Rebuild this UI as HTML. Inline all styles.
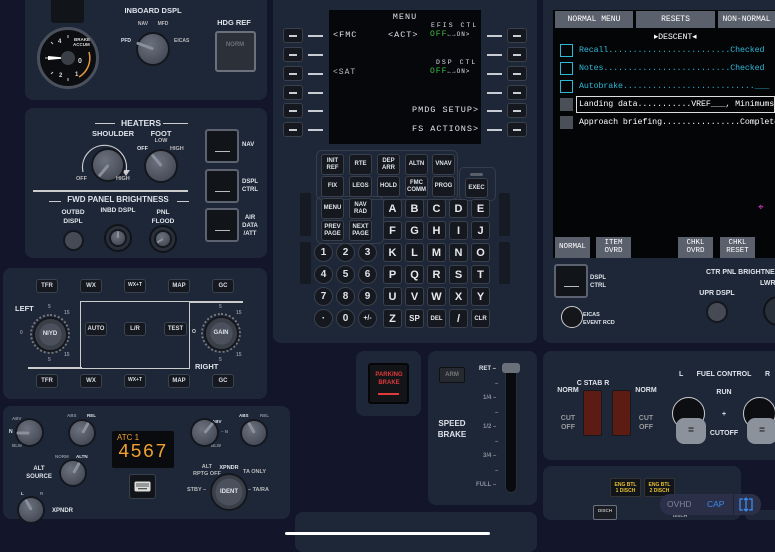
<!DOCTYPE html>
<html><head><meta charset="utf-8"><style>
*{margin:0;padding:0;box-sizing:border-box}
body{width:775px;height:540px;background:#13152a;position:relative;overflow:hidden;font-family:"Liberation Sans",sans-serif;color:#dfe3ea;font-weight:bold}
.a{position:absolute}
.pn{position:absolute;background:#1e2738;border-radius:8px}
.t{position:absolute;font-size:8px;white-space:nowrap;line-height:1}
.c{transform:translateX(-50%);text-align:center}
.btn{position:absolute;background:#15191f;border:1px solid #3b4250;border-radius:3px;font-size:6px;color:#d8dce4;display:flex;align-items:center;justify-content:center;text-align:center;line-height:1.05}
.sq{position:absolute;background:#111418;border:2px solid #5c6270;border-radius:3px}
.sq::after{content:"";position:absolute;left:25%;right:25%;bottom:30%;height:1px;background:#bbb}
.knob{position:absolute;border-radius:50%;background:radial-gradient(circle at 40% 35%,#6b717e,#3a3f4a);box-shadow:0 0 0 2px #14171d}
.knob i{position:absolute;left:50%;top:50%;width:3px;height:50%;margin-left:-1.5px;background:#8a909c;transform-origin:50% 0;border-radius:2px}
.ring{position:absolute;border-radius:50%;background:#2a303a;box-shadow:0 0 0 2px #101318}
.lsk{position:absolute;width:20px;height:15px;background:#15191f;border:1px solid #3a404c;border-radius:3px}
.lsk::after{content:"";position:absolute;left:5px;right:5px;top:6px;height:1.5px;background:#c9ccd2}
.dash{position:absolute;width:15px;height:1.5px;background:#c9ccd2}
.key{position:absolute;width:19px;height:19px;background:#15191f;border:1px solid #3a404c;border-radius:3px;font-size:11px;color:#e6e8ec;display:flex;align-items:center;justify-content:center}
.num{position:absolute;width:19px;height:19px;border-radius:50%;background:#15191f;border:1px solid #3a404c;font-size:10px;display:flex;align-items:center;justify-content:center}
.fk{position:absolute;width:23px;height:21px;background:#15191f;border:1px solid #3a404c;border-radius:3px;font-size:6px;display:flex;align-items:center;justify-content:center;text-align:center;line-height:1.1}
.scr{font-family:"Liberation Mono",monospace;font-weight:normal;letter-spacing:1px}
.cl{font-family:"Liberation Mono",monospace;font-weight:normal;font-size:8.3px;position:absolute;white-space:nowrap;letter-spacing:-0.1px}
.cb{position:absolute;width:13px;height:13px;border:1px solid #2fb8d8}
.gb{position:absolute;width:13px;height:13px;background:#4a4f58}
.tab{position:absolute;top:11px;height:17px;background:#5a606c;font-family:"Liberation Mono",monospace;font-size:8px;display:flex;align-items:center;justify-content:center;color:#fff;font-weight:normal}
.bb{position:absolute;top:237px;height:21px;background:#5a606c;font-family:"Liberation Mono",monospace;font-size:7.5px;display:flex;align-items:center;justify-content:center;text-align:center;color:#fff;font-weight:normal;line-height:1}
.side{position:absolute;width:11px;background:#161a22;border-radius:2px}
.g{color:#8a909a}
</style></head><body>

<div class="t c" style="left:387px;top:1px;font-size:8px;color:#aaa;letter-spacing:1px">•••</div>

<!-- TOP LEFT PANEL -->
<div class="pn" style="left:25px;top:-8px;width:242px;height:108px"></div>
<div class="a" style="left:51px;top:0;width:33px;height:23px;background:#111418;border-radius:0 0 3px 3px"></div>
<div class="a" style="left:37px;top:27px;width:62px;height:62px;border-radius:50%;background:#0c0d10;border:3px solid #4a505c"></div>
<svg class="a" style="left:37px;top:27px" width="62" height="62" viewBox="0 0 62 62">
<path d="M52 25 A22 22 0 0 1 42 50" stroke="#e59a3a" stroke-width="1.5" fill="none"/>
<g stroke="#ccc" stroke-width="1">
<line x1="31" y1="8" x2="31" y2="11"/><line x1="14" y1="15" x2="16" y2="17"/><line x1="8" y1="31" x2="11" y2="31"/><line x1="14" y1="47" x2="16" y2="45"/><line x1="31" y1="54" x2="31" y2="51"/>
</g>
<polygon points="11,29 32,31 11,33" fill="#fff"/>
<circle cx="31" cy="31" r="7" fill="#3a3e46"/>
<text x="21" y="16" fill="#ddd" font-size="6" font-family="Liberation Sans">4</text>
<text x="41" y="36" fill="#ddd" font-size="7" font-family="Liberation Sans">0</text>
<text x="22" y="50" fill="#ddd" font-size="6" font-family="Liberation Sans">2</text>
<text x="38" y="49" fill="#ddd" font-size="6" font-family="Liberation Sans">1</text>
<text x="37" y="14" fill="#ddd" font-size="4.5" font-family="Liberation Sans" font-weight="bold">BRAKE</text>
<text x="36" y="19" fill="#ddd" font-size="4.5" font-family="Liberation Sans" font-weight="bold">ACCUM</text>
</svg>
<div class="t c" style="left:153px;top:7px;font-size:7.5px">INBOARD DSPL</div>
<div class="t c g" style="left:143px;top:22px;font-size:5px;color:#bbb">NAV</div>
<div class="t c g" style="left:163px;top:22px;font-size:5px;color:#bbb">MFD</div>
<div class="t" style="left:121px;top:39px;font-size:5px">PFD</div>
<div class="t" style="left:174px;top:39px;font-size:5px;color:#bbb">EICAS</div>
<div class="knob" style="left:138px;top:34px;width:30px;height:30px"><i style="transform:rotate(110deg);height:60%"></i></div>
<div class="t c" style="left:234px;top:19px;font-size:7.5px">HDG REF</div>
<div class="a" style="left:215px;top:31px;width:41px;height:41px;border:2px solid #6a707c;background:#2c3038;border-radius:3px"></div>
<div class="t c g" style="left:235px;top:42px;font-size:6px;color:#6a707a">NORM</div>

<!-- HEATERS PANEL -->
<div class="pn" style="left:25px;top:108px;width:242px;height:150px"></div>
<div class="a" style="left:95px;top:123px;width:20px;height:1px;background:#ccc"></div>
<div class="a" style="left:163px;top:123px;width:25px;height:1px;background:#ccc"></div>
<div class="t c" style="left:141px;top:119px;font-size:8.5px">HEATERS</div>
<div class="t c" style="left:113px;top:130px;font-size:7.5px">SHOULDER</div>
<div class="t c" style="left:161px;top:130px;font-size:7.5px">FOOT</div>
<div class="t c" style="left:161px;top:139px;font-size:5.5px;color:#bbb">LOW</div>
<div class="t" style="left:137px;top:147px;font-size:5.5px">OFF</div>
<div class="t" style="left:170px;top:147px;font-size:5.5px;color:#bbb">HIGH</div>
<svg class="a" style="left:78px;top:140px" width="55" height="40"><path d="M5 32 A22 22 0 1 1 48 32" stroke="#ccc" stroke-width="1.2" fill="none"/><polygon points="44,30 52,30 48,36" fill="#ccc"/></svg>
<div class="knob" style="left:93px;top:150px;width:30px;height:30px"><i style="transform:rotate(40deg)"></i></div>
<div class="knob" style="left:146px;top:151px;width:30px;height:30px"><i style="transform:rotate(140deg)"></i></div>
<div class="t" style="left:76px;top:177px;font-size:5.5px;color:#bbb">OFF</div>
<div class="t" style="left:116px;top:177px;font-size:5.5px;color:#bbb">HIGH</div>
<div class="a" style="left:33px;top:190px;width:155px;height:1.5px;background:#ccc"></div>
<div class="a" style="left:49px;top:201px;width:12px;height:1px;background:#ccc"></div>
<div class="a" style="left:177px;top:201px;width:12px;height:1px;background:#ccc"></div>
<div class="t c" style="left:118px;top:196px;font-size:8px">FWD PANEL BRIGHTNESS</div>
<div class="t c" style="left:73px;top:208px;font-size:6.5px;line-height:9px">OUTBD<br>DISPL</div>
<div class="t c" style="left:118px;top:208px;font-size:6.5px">INBD DSPL</div>
<div class="t c" style="left:163px;top:208px;font-size:6.5px;line-height:9px">PNL<br>FLOOD</div>
<div class="knob" style="left:65px;top:232px;width:17px;height:17px;background:#454a54"></div>
<div class="ring" style="left:106px;top:226px;width:24px;height:24px"></div>
<div class="knob" style="left:111px;top:231px;width:14px;height:14px"><i style="transform:rotate(180deg);width:2px"></i></div>
<div class="ring" style="left:151px;top:227px;width:24px;height:24px"></div>
<div class="knob" style="left:156px;top:232px;width:14px;height:14px"><i style="transform:rotate(60deg);width:2px"></i></div>
<div class="sq" style="left:205px;top:129px;width:34px;height:34px"></div>
<div class="t" style="left:242px;top:142px;font-size:6px">NAV</div>
<div class="sq" style="left:205px;top:169px;width:34px;height:34px"></div>
<div class="t" style="left:242px;top:178px;font-size:6px;line-height:8px">DSPL<br>CTRL</div>
<div class="sq" style="left:205px;top:208px;width:34px;height:34px"></div>
<div class="t c" style="left:250px;top:214px;font-size:6px;line-height:8px">AIR<br>DATA<br>/ATT</div>

<!-- WX RADAR PANEL -->
<div class="pn" style="left:3px;top:268px;width:264px;height:131px"></div>
<div class="btn" style="left:36px;top:279px;width:22px;height:14px">TFR</div>
<div class="btn" style="left:80px;top:279px;width:22px;height:14px">WX</div>
<div class="btn" style="left:124px;top:279px;width:22px;height:14px;font-size:5px">WX+T</div>
<div class="btn" style="left:168px;top:279px;width:22px;height:14px">MAP</div>
<div class="btn" style="left:212px;top:279px;width:22px;height:14px">GC</div>
<div class="btn" style="left:36px;top:374px;width:22px;height:14px">TFR</div>
<div class="btn" style="left:80px;top:374px;width:22px;height:14px">WX</div>
<div class="btn" style="left:124px;top:374px;width:22px;height:14px;font-size:5px">WX+T</div>
<div class="btn" style="left:168px;top:374px;width:22px;height:14px">MAP</div>
<div class="btn" style="left:212px;top:374px;width:22px;height:14px">GC</div>
<div class="a" style="left:80px;top:301px;width:110px;height:68px;border:1.5px solid #ccc"></div>
<div class="a" style="left:189px;top:301px;width:54px;height:1.5px;background:#ccc"></div>
<div class="a" style="left:28px;top:367px;width:54px;height:1.5px;background:#ccc"></div>
<div class="btn" style="left:85px;top:322px;width:22px;height:14px">AUTO</div>
<div class="btn" style="left:124px;top:322px;width:22px;height:14px">L/R</div>
<div class="btn" style="left:164px;top:322px;width:23px;height:14px">TEST</div>
<div class="t" style="left:15px;top:305px;font-size:7.5px">LEFT</div>
<div class="t" style="left:195px;top:363px;font-size:7.5px">RIGHT</div>
<div class="t g" style="left:20px;top:331px;font-size:5px">0</div>
<div class="t g" style="left:48px;top:305px;font-size:5px">5</div><div class="t g" style="left:64px;top:311px;font-size:5px">15</div>
<div class="t g" style="left:48px;top:358px;font-size:5px">5</div><div class="t g" style="left:64px;top:353px;font-size:5px">15</div>
<div class="a" style="left:30px;top:314px;width:40px;height:40px;border-radius:50%;border:2px dotted #777"></div>
<div class="knob" style="left:35px;top:319px;width:31px;height:31px;background:radial-gradient(circle,#4a505c 50%,#3a3f48 52%)"></div>
<div class="t c" style="left:50px;top:331px;font-size:6px">NIYD</div>
<div class="t g" style="left:192px;top:330px;font-size:5px;color:#ddd">O</div>
<div class="t g" style="left:219px;top:305px;font-size:5px">5</div><div class="t g" style="left:236px;top:311px;font-size:5px">15</div>
<div class="t g" style="left:219px;top:358px;font-size:5px">5</div><div class="t g" style="left:236px;top:353px;font-size:5px">15</div>
<div class="a" style="left:201px;top:313px;width:40px;height:40px;border-radius:50%;border:2px dotted #777"></div>
<div class="knob" style="left:206px;top:318px;width:31px;height:31px;background:radial-gradient(circle,#4a505c 50%,#3a3f48 52%)"></div>
<div class="t c" style="left:221px;top:330px;font-size:6px">GAIN</div>

<!-- XPDR PANEL -->
<div class="pn" style="left:3px;top:406px;width:287px;height:113px"></div>
<div class="t g" style="left:12px;top:417px;font-size:4.5px">ABV</div>
<div class="t" style="left:9px;top:430px;font-size:5px">N</div>
<div class="t g" style="left:12px;top:444px;font-size:4.5px">BLW</div>
<div class="knob" style="left:17px;top:420px;width:25px;height:25px"><i style="transform:rotate(90deg)"></i></div>
<div class="t g" style="left:67px;top:414px;font-size:4.5px">ABS</div><div class="t" style="left:87px;top:414px;font-size:4.5px">REL</div>
<div class="knob" style="left:70px;top:421px;width:24px;height:24px"><i style="transform:rotate(210deg)"></i></div>
<div class="t g" style="left:55px;top:455px;font-size:4.5px">NORM</div><div class="t" style="left:76px;top:455px;font-size:4.5px">ALTN</div>
<div class="knob" style="left:61px;top:461px;width:24px;height:24px"><i style="transform:rotate(210deg)"></i></div>
<div class="t c" style="left:39px;top:465px;font-size:6px;line-height:8px">ALT<br>SOURCE</div>
<div class="t" style="left:21px;top:492px;font-size:4.5px">L</div><div class="t g" style="left:40px;top:492px;font-size:4.5px">R</div>
<div class="knob" style="left:19px;top:498px;width:24px;height:24px"><i style="transform:rotate(150deg)"></i></div>
<div class="t" style="left:52px;top:508px;font-size:6px">XPNDR</div>
<div class="a" style="left:112px;top:431px;width:62px;height:37px;background:#0a0b0e;border-radius:2px"></div>
<div class="t" style="left:117px;top:434px;font-size:8px;color:#f0a030;font-weight:normal">ATC 1</div>
<div class="t" style="left:118px;top:443px;font-size:19px;color:#f0a030;font-weight:normal;font-family:'Liberation Mono',monospace;letter-spacing:1px">4567</div>
<div class="a" style="left:129px;top:474px;width:27px;height:25px;background:#111418;border:1px solid #3a404c;border-radius:3px"></div>
<svg class="a" style="left:134px;top:481px" width="17" height="11"><rect x="0.5" y="0.5" width="16" height="10" rx="1.5" fill="#ddd"/><g fill="#555"><rect x="2" y="2.5" width="13" height="1"/><rect x="2" y="4.5" width="13" height="1"/><rect x="4" y="7" width="9" height="1.3"/></g></svg>
<div class="t" style="left:212px;top:420px;font-size:4.5px">ABV</div><div class="t g" style="left:221px;top:430px;font-size:4.5px">– N</div><div class="t g" style="left:211px;top:444px;font-size:4.5px">BLW</div>
<div class="knob" style="left:192px;top:420px;width:25px;height:25px"><i style="transform:rotate(220deg)"></i></div>
<div class="t" style="left:239px;top:414px;font-size:4.5px">ABS</div><div class="t g" style="left:260px;top:414px;font-size:4.5px">REL</div>
<div class="knob" style="left:242px;top:421px;width:24px;height:24px"><i style="transform:rotate(150deg)"></i></div>
<div class="t g" style="left:193px;top:464px;font-size:5.5px;color:#bbb;line-height:7px;text-align:center">ALT<br>RPTG OFF</div>
<div class="t c" style="left:229px;top:466px;font-size:5.5px">XPNDR</div>
<div class="t" style="left:243px;top:470px;font-size:5.5px;color:#bbb">TA ONLY</div>
<div class="t" style="left:187px;top:488px;font-size:5.5px;color:#bbb">STBY –</div>
<div class="t" style="left:248px;top:488px;font-size:5.5px;color:#bbb">– TA/RA</div>
<div class="knob" style="left:212px;top:475px;width:34px;height:34px;background:radial-gradient(circle,#4a505c 55%,#3a3f48 57%)"></div>
<div class="t c" style="left:229px;top:489px;font-size:6px">IDENT</div>

<!-- CDU PANEL -->
<div class="pn" style="left:273px;top:-8px;width:264px;height:351px"></div>
<div class="a" style="left:329px;top:10px;width:152px;height:134px;background:#06070b"></div>
<div class="t c scr" style="left:405px;top:13px;font-size:8.5px">MENU</div>
<div class="t scr" style="left:333px;top:31px;font-size:8.5px">&lt;FMC</div>
<div class="t scr" style="left:388px;top:31px;font-size:8.5px">&lt;ACT&gt;</div>
<div class="t scr" style="left:431px;top:23px;font-size:6.5px;letter-spacing:2px">EFIS CTL</div>
<div class="t scr" style="left:430px;top:31px;font-size:8px"><span style="color:#3ec040">OFF</span><span style="font-size:6px">←→ON&gt;</span></div>
<div class="t scr" style="left:436px;top:60px;font-size:6.5px;letter-spacing:2px">DSP CTL</div>
<div class="t scr" style="left:430px;top:68px;font-size:8px"><span style="color:#3ec040">OFF</span><span style="font-size:6px">←→ON&gt;</span></div>
<div class="t scr" style="left:333px;top:69px;font-size:8px;color:#bbb">&lt;SAT</div>
<div class="t scr" style="left:412px;top:106px;font-size:8.5px">PMDG SETUP&gt;</div>
<div class="t scr" style="left:412px;top:125px;font-size:8.5px">FS ACTIONS&gt;</div>
<div class="lsk" style="left:283px;top:28px"></div><div class="dash" style="left:308px;top:35px"></div>
<div class="lsk" style="left:283px;top:47px"></div><div class="dash" style="left:308px;top:54px"></div>
<div class="lsk" style="left:283px;top:66px"></div><div class="dash" style="left:308px;top:73px"></div>
<div class="lsk" style="left:283px;top:85px"></div><div class="dash" style="left:308px;top:92px"></div>
<div class="lsk" style="left:283px;top:103px"></div><div class="dash" style="left:308px;top:110px"></div>
<div class="lsk" style="left:283px;top:122px"></div><div class="dash" style="left:308px;top:129px"></div>
<div class="lsk" style="left:507px;top:28px"></div><div class="dash" style="left:487px;top:35px"></div>
<div class="lsk" style="left:507px;top:47px"></div><div class="dash" style="left:487px;top:54px"></div>
<div class="lsk" style="left:507px;top:66px"></div><div class="dash" style="left:487px;top:73px"></div>
<div class="lsk" style="left:507px;top:85px"></div><div class="dash" style="left:487px;top:92px"></div>
<div class="lsk" style="left:507px;top:103px"></div><div class="dash" style="left:487px;top:110px"></div>
<div class="lsk" style="left:507px;top:122px"></div><div class="dash" style="left:487px;top:129px"></div>
<div class="a" style="left:316px;top:150px;width:142px;height:50px;border:1px solid #353c4a;border-radius:6px"></div>
<div class="a" style="left:316px;top:196px;width:68px;height:48px;border:1px solid #353c4a;border-radius:6px"></div>
<div class="a" style="left:459px;top:167px;width:37px;height:34px;border:1px solid #353c4a;border-radius:5px"></div>
<div class="fk" style="left:321px;top:154px">INIT<br>REF</div>
<div class="fk" style="left:349px;top:154px">RTE</div>
<div class="fk" style="left:377px;top:154px">DEP<br>ARR</div>
<div class="fk" style="left:405px;top:154px">ALTN</div>
<div class="fk" style="left:432px;top:154px">VNAV</div>
<div class="fk" style="left:321px;top:176px">FIX</div>
<div class="fk" style="left:349px;top:176px">LEGS</div>
<div class="fk" style="left:377px;top:176px">HOLD</div>
<div class="fk" style="left:405px;top:176px">FMC<br>COMM</div>
<div class="fk" style="left:432px;top:176px">PROG</div>
<div class="a" style="left:470px;top:173px;width:13px;height:3px;background:#5a606a;border-radius:2px"></div>
<div class="fk" style="left:465px;top:178px;height:20px">EXEC</div>
<div class="fk" style="left:321px;top:198px">MENU</div>
<div class="fk" style="left:349px;top:198px">NAV<br>RAD</div>
<div class="fk" style="left:321px;top:220px">PREV<br>PAGE</div>
<div class="fk" style="left:349px;top:220px">NEXT<br>PAGE</div>
<div class="side" style="left:300px;top:193px;height:43px"></div><div class="side" style="left:300px;top:242px;height:42px"></div>
<div class="side" style="left:499px;top:193px;height:43px"></div><div class="side" style="left:499px;top:242px;height:42px"></div>
<div class="key" style="left:383px;top:199px">A</div><div class="key" style="left:405px;top:199px">B</div><div class="key" style="left:427px;top:199px">C</div><div class="key" style="left:449px;top:199px">D</div><div class="key" style="left:471px;top:199px">E</div>
<div class="key" style="left:383px;top:221px">F</div><div class="key" style="left:405px;top:221px">G</div><div class="key" style="left:427px;top:221px">H</div><div class="key" style="left:449px;top:221px">I</div><div class="key" style="left:471px;top:221px">J</div>
<div class="key" style="left:383px;top:243px">K</div><div class="key" style="left:405px;top:243px">L</div><div class="key" style="left:427px;top:243px">M</div><div class="key" style="left:449px;top:243px">N</div><div class="key" style="left:471px;top:243px">O</div>
<div class="key" style="left:383px;top:265px">P</div><div class="key" style="left:405px;top:265px">Q</div><div class="key" style="left:427px;top:265px">R</div><div class="key" style="left:449px;top:265px">S</div><div class="key" style="left:471px;top:265px">T</div>
<div class="key" style="left:383px;top:287px">U</div><div class="key" style="left:405px;top:287px">V</div><div class="key" style="left:427px;top:287px">W</div><div class="key" style="left:449px;top:287px">X</div><div class="key" style="left:471px;top:287px">Y</div>
<div class="key" style="left:383px;top:309px">Z</div><div class="key" style="left:405px;top:309px;font-size:8px">SP</div><div class="key" style="left:427px;top:309px;font-size:6px">DEL</div><div class="key" style="left:449px;top:309px">/</div><div class="key" style="left:471px;top:309px;font-size:6px">CLR</div>
<div class="num" style="left:314px;top:243px">1</div><div class="num" style="left:336px;top:243px">2</div><div class="num" style="left:358px;top:243px">3</div>
<div class="num" style="left:314px;top:265px">4</div><div class="num" style="left:336px;top:265px">5</div><div class="num" style="left:358px;top:265px">6</div>
<div class="num" style="left:314px;top:287px">7</div><div class="num" style="left:336px;top:287px">8</div><div class="num" style="left:358px;top:287px">9</div>
<div class="num" style="left:314px;top:309px">·</div><div class="num" style="left:336px;top:309px">0</div><div class="num" style="left:358px;top:309px;font-size:7px">+/-</div>

<!-- PARKING BRAKE -->
<div class="pn" style="left:356px;top:351px;width:65px;height:65px"></div>
<div class="a" style="left:368px;top:363px;width:41px;height:41px;background:#121418;border:2px solid #050608;border-radius:3px"></div>
<div class="t c" style="left:389px;top:371px;font-size:6px;color:#e03a3a;line-height:8px">PARKING<br>BRAKE</div>
<div class="a" style="left:378px;top:393px;width:21px;height:2px;background:#e03a3a"></div>

<!-- SPEED BRAKE -->
<div class="pn" style="left:428px;top:351px;width:109px;height:154px"></div>
<div class="a" style="left:439px;top:367px;width:26px;height:16px;background:#262a30;border:1px solid #111;border-radius:2px"></div>
<div class="t c" style="left:452px;top:372px;font-size:6px;color:#777">ARM</div>
<div class="t c" style="left:452px;top:418px;font-size:8px;line-height:11px">SPEED<br>BRAKE</div>
<div class="t" style="left:479px;top:366px;font-size:6px">RET –</div>
<div class="t g" style="left:495px;top:381px;font-size:6px">–</div>
<div class="t g" style="left:483px;top:395px;font-size:6px">1/4 –</div>
<div class="t g" style="left:495px;top:410px;font-size:6px">–</div>
<div class="t g" style="left:483px;top:424px;font-size:6px">1/2 –</div>
<div class="t g" style="left:495px;top:439px;font-size:6px">–</div>
<div class="t g" style="left:483px;top:453px;font-size:6px">3/4 –</div>
<div class="t g" style="left:495px;top:468px;font-size:6px">–</div>
<div class="t g" style="left:476px;top:482px;font-size:6px">FULL –</div>
<div class="a" style="left:505px;top:366px;width:12px;height:127px;background:#0a0b0e;border:1px solid #2a2e36;border-radius:6px"></div>
<div class="a" style="left:502px;top:363px;width:18px;height:10px;background:#6a707a;border-radius:3px"></div>

<div class="pn" style="left:295px;top:512px;width:242px;height:40px"></div>

<!-- CHECKLIST PANEL -->
<div class="pn" style="left:543px;top:-8px;width:240px;height:351px"></div>
<div class="a" style="left:553px;top:10px;width:222px;height:248px;background:#040507"></div>
<div class="tab" style="left:555px;width:78px">NORMAL MENU</div>
<div class="tab" style="left:636px;width:79px">RESETS</div>
<div class="tab" style="left:718px;width:57px">NON-NORMAL</div>
<div class="cl" style="left:654px;top:31px;color:#fff">▸DESCENT◂</div>
<div class="cb" style="left:560px;top:44px"></div><div class="cl" style="left:579px;top:46px;color:#2fb8d8">Recall.........................Checked</div>
<div class="cb" style="left:560px;top:62px"></div><div class="cl" style="left:579px;top:64px;color:#2fb8d8">Notes..........................Checked</div>
<div class="cb" style="left:560px;top:80px"></div><div class="cl" style="left:579px;top:82px;color:#2fb8d8">Autobrake...........................___</div>
<div class="gb" style="left:560px;top:98px"></div>
<div class="a" style="left:576px;top:96px;width:199px;height:17px;border:1px solid #ddd"></div>
<div class="cl" style="left:579px;top:100px;color:#fff">Landing data...........VREF___, Minimums___</div>
<div class="gb" style="left:560px;top:116px"></div><div class="cl" style="left:579px;top:118px;color:#fff">Approach briefing................Completed</div>
<div class="t" style="left:758px;top:203px;font-size:10px;color:#e040e0;font-weight:normal">⌖</div>
<div class="bb" style="left:555px;width:35px">NORMAL</div>
<div class="bb" style="left:596px;width:35px">ITEM<br>OVRD</div>
<div class="bb" style="left:678px;width:35px">CHKL<br>OVRD</div>
<div class="bb" style="left:720px;width:35px">CHKL<br>RESET</div>
<div class="sq" style="left:554px;top:264px;width:34px;height:34px"></div>
<div class="t" style="left:590px;top:274px;font-size:6px;line-height:8px">DSPL<br>CTRL</div>
<div class="a" style="left:561px;top:306px;width:22px;height:22px;border-radius:50%;background:#14161a;border:1.5px solid #ccc"></div>
<div class="t" style="left:583px;top:311px;font-size:5.5px;line-height:8px">EICAS<br>EVENT RCD</div>
<div class="t" style="left:706px;top:269px;font-size:7px">CTR PNL BRIGHTNESS</div>
<div class="t" style="left:760px;top:280px;font-size:7px">LWR</div>
<div class="t c" style="left:717px;top:290px;font-size:7px">UPR DSPL</div>
<div class="knob" style="left:708px;top:303px;width:18px;height:18px;background:#454a54"></div>
<div class="ring" style="left:765px;top:298px;width:26px;height:26px"></div>

<!-- FUEL CONTROL -->
<div class="pn" style="left:543px;top:351px;width:240px;height:109px"></div>
<div class="t c" style="left:593px;top:380px;font-size:7px">C STAB R</div>
<div class="t c" style="left:568px;top:387px;font-size:7px">NORM</div>
<div class="t c" style="left:646px;top:387px;font-size:7px">NORM</div>
<div class="t c" style="left:568px;top:414px;font-size:7px;color:#999;line-height:9px">CUT<br>OFF</div>
<div class="t c" style="left:646px;top:414px;font-size:7px;color:#999;line-height:9px">CUT<br>OFF</div>
<div class="a" style="left:583px;top:390px;width:19px;height:46px;background:#5c1c14;border:1.5px solid #16181c;border-radius:2px"></div>
<div class="a" style="left:612px;top:390px;width:19px;height:46px;background:#5c1c14;border:1.5px solid #16181c;border-radius:2px"></div>
<div class="t" style="left:679px;top:371px;font-size:7px">L</div>
<div class="t c" style="left:724px;top:371px;font-size:7px">FUEL CONTROL</div>
<div class="t" style="left:765px;top:371px;font-size:7px">R</div>
<div class="t c" style="left:724px;top:389px;font-size:7px">RUN</div>
<div class="t c" style="left:724px;top:411px;font-size:7px">+</div>
<div class="t c" style="left:724px;top:430px;font-size:7px">CUTOFF</div>
<div class="a" style="left:672px;top:397px;width:33px;height:33px;border-radius:50%;background:#0d0e12;border:1.5px solid #ccc"></div>
<div class="a" style="left:676px;top:418px;width:30px;height:26px;background:#8c929c;border-radius:8px;font-size:10px;color:#222;text-align:center;line-height:26px">=</div>
<div class="a" style="left:743px;top:397px;width:33px;height:33px;border-radius:50%;background:#0d0e12;border:1.5px solid #ccc"></div>
<div class="a" style="left:747px;top:418px;width:30px;height:26px;background:#8c929c;border-radius:8px;font-size:10px;color:#222;text-align:center;line-height:26px">=</div>

<div class="pn" style="left:543px;top:466px;width:198px;height:54px"></div>
<div class="pn" style="left:745px;top:510px;width:40px;height:10px"></div>
<div class="a" style="left:610px;top:478px;width:31px;height:19px;background:#111418;border:1px solid #333;border-radius:2px;font-size:5px;color:#e8c030;text-align:center;line-height:6px;padding-top:3px">ENG BTL<br>1 DISCH</div>
<div class="a" style="left:644px;top:478px;width:31px;height:19px;background:#111418;border:1px solid #333;border-radius:2px;font-size:5px;color:#e8c030;text-align:center;line-height:6px;padding-top:3px">ENG BTL<br>2 DISCH</div>
<div class="a" style="left:593px;top:505px;width:24px;height:15px;background:#1a1e24;border:1px solid #6a7080;border-radius:2px;font-size:4.5px;color:#bbb;text-align:center;padding-top:2px">DISCH</div>
<div class="t" style="left:673px;top:514px;font-size:4.5px;color:#aaa">DISCH</div>
<div class="a" style="left:660px;top:494px;width:101px;height:21px;background:#2c2f48;border-radius:10px"></div>
<div class="t" style="left:667px;top:500px;font-size:8.5px;color:#7e8498;font-weight:normal">OVHD</div>
<div class="t" style="left:707px;top:500px;font-size:8.5px;color:#3a8cf0;font-weight:normal">CAP</div>
<div class="a" style="left:733px;top:494px;width:1px;height:21px;background:#20223a"></div>
<svg class="a" style="left:739px;top:497px" width="14" height="15"><path d="M4 2H1V13H4M10 2H13V13H10M7 1V14M5 3L7 1L9 3M5 12L7 14L9 12" stroke="#3a8cf0" stroke-width="1.3" fill="none"/></svg>

<div class="a" style="left:285px;top:532px;width:205px;height:3px;background:#fff;border-radius:2px"></div>
</body></html>
